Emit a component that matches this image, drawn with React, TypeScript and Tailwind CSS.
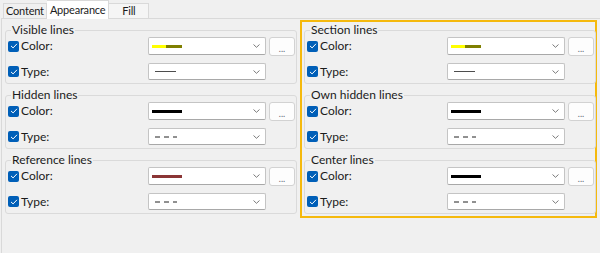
import React from 'react';

type Swatch = 'yellow' | 'black' | 'red';
type LineType = 'solid' | 'dashed';

interface Group {
  title: string;
  color: Swatch;
  type: LineType;
}

const leftGroups: Group[] = [
  { title: 'Visible lines', color: 'yellow', type: 'solid' },
  { title: 'Hidden lines', color: 'black', type: 'dashed' },
  { title: 'Reference lines', color: 'red', type: 'dashed' },
];

const rightGroups: Group[] = [
  { title: 'Section lines', color: 'yellow', type: 'solid' },
  { title: 'Own hidden lines', color: 'black', type: 'dashed' },
  { title: 'Center lines', color: 'black', type: 'dashed' },
];

function Check() {
  return (
    <span className="flex h-[11px] w-[11px] shrink-0 items-center justify-center rounded-[2px] bg-[#005fb8]">
      <svg width="8" height="8" viewBox="0 0 8 8" fill="none">
        <path d="M1.3 4.2 3.1 5.9 6.7 2.1" stroke="white" strokeWidth="1" strokeLinecap="round" strokeLinejoin="round" />
      </svg>
    </span>
  );
}

function Chevron() {
  return (
    <svg width="7" height="4" viewBox="0 0 7 4" fill="none" className="ml-auto mr-[5px]">
      <path d="M0.5 0.5 3.5 3.3 6.5 0.5" stroke="#6b6b6b" strokeWidth="0.9" />
    </svg>
  );
}

function ColorPreview({ color }: { color: Swatch }) {
  if (color === 'yellow') {
    return (
      <span className="ml-[3px] flex h-[3px]">
        <span className="w-[14px] bg-[#ffff00]" />
        <span className="w-[16px] bg-[#7f7f00]" />
      </span>
    );
  }
  return <span className={color === 'red' ? 'ml-[3px] h-[3px] w-[30px] bg-[#8b3535]' : 'ml-[3px] h-[3px] w-[30px] bg-black'} />;
}

function TypePreview({ type }: { type: LineType }) {
  if (type === 'solid') return <span className="ml-[6px] h-px w-[21px] bg-[#4d4d4d]" />;
  return (
    <svg width="22" height="2" className="ml-[6px]">
      <line x1="0" y1="1" x2="22" y2="1" stroke="#222" strokeWidth="1" strokeDasharray="5 4" />
    </svg>
  );
}

function Combo({ children, h }: { children: React.ReactNode; h: string }) {
  return (
    <div className={`flex w-[118px] items-center rounded-[2px] border border-[#c4c4c4] border-b-[#a8a8a8] bg-white ${h}`}>
      {children}
      <Chevron />
    </div>
  );
}

function LineGroup({ g, first, w }: { g: Group; first?: boolean; w: string }) {
  return (
    <fieldset className={`rounded-[3px] border border-[#dadada] px-[1px] pb-[3px] ${w} ${first ? '' : 'mt-[4px]'}`}>
      <legend className="ml-[4px] px-[1px] leading-[14px]">{g.title}</legend>
      <div className="flex h-[18px] items-center pl-[1px]">
        <Check />
        <span className="ml-[2px] w-[127px]">Color:</span>
        <Combo h="h-[18px]">
          <ColorPreview color={g.color} />
        </Combo>
        <button className="ml-[3px] flex h-[19px] w-[26px] items-end justify-center rounded-[3px] border border-[#d2d2d2] bg-[#fdfdfd] pb-[2px] text-[9px] leading-[9px] text-[#606a78]">
          ...
        </button>
      </div>
      <div className="mt-[8px] flex h-[17px] items-center pl-[1px]">
        <Check />
        <span className="ml-[2px] w-[127px]">Type:</span>
        <Combo h="h-[17px]">
          <TypePreview type={g.type} />
        </Combo>
      </div>
    </fieldset>
  );
}

export default function App() {
  return (
    <div className="h-[253px] w-[600px] overflow-hidden bg-[#f0f0f0] text-[12px] text-[#1b1b1b]" style={{ fontFamily: 'Lato, "Noto Sans", sans-serif' }}>
      <div className="flex h-[18px] items-end whitespace-nowrap pl-[3px] text-[11px] tracking-[-0.2px]">
        <div className="flex h-[15px] items-center border border-b-0 border-[#d9d9d9] bg-[#f0f0f0] px-[2px]">Content</div>
        <div className="relative z-10 -mb-px flex h-[19px] items-center border border-b-0 border-l-0 border-[#d9d9d9] bg-white px-[3px]">Appearance</div>
        <div className="flex h-[15px] w-[40px] items-center justify-center border border-b-0 border-l-0 border-[#d9d9d9] bg-[#f5f5f5]">Fill</div>
      </div>
      <div className="ml-[1px] flex h-[235px] border-l border-t border-[#d9d9d9]">
        <div className="flex w-[298px] flex-col pl-[3px] pt-[4px]">
          {leftGroups.map((g, i) => (
            <LineGroup key={g.title} g={g} first={i === 0} w="w-[292px]" />
          ))}
        </div>
        <div className="mt-[1px] flex h-[198px] w-[297px] flex-col border-2 border-[#f5b90d] pl-[2px] pt-[1px]">
          {rightGroups.map((g, i) => (
            <LineGroup key={g.title} g={g} first={i === 0} w="w-[291px]" />
          ))}
        </div>
      </div>
    </div>
  );
}
